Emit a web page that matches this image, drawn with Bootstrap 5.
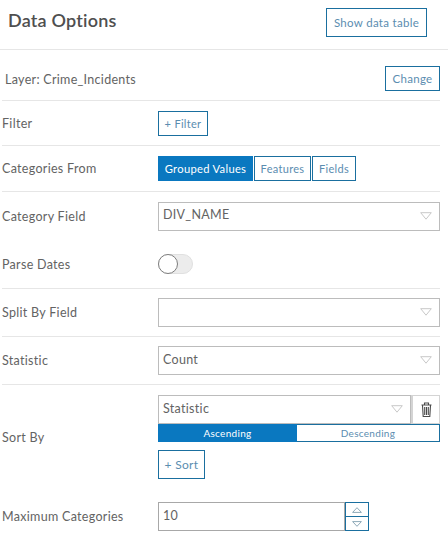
<!DOCTYPE html>
<html lang="en">
<head>
<meta charset="utf-8">
<title>Data Options</title>
<link rel="stylesheet" href="https://cdn.jsdelivr.net/npm/bootstrap@5.3.0/dist/css/bootstrap.min.css">
<style>
html,body{background:#fff;overflow:hidden}
body{font-family:Lato,"Open Sans","Liberation Sans",sans-serif;font-size:12.5px;color:#636363;width:448px;height:554px;letter-spacing:.3px}
.panel-head{height:50px;padding:8px 21px 0 8px;border-bottom:1px solid #e6e6e6}
.panel-title{font-size:18px;font-weight:600;color:#4f4f4f;line-height:26px;margin:-1px 0 0;letter-spacing:.2px}
.opt-row{margin:0 8px 0 2px;border-bottom:1px solid #e6e6e6}
.opt-row.plain{border-bottom:0}
.opt-label{width:156px;flex:none;padding-top:2px}
.layer-name{padding:3px 0 0 3px}
.opt-ctl{width:282px;flex:none}
.esri-btn{display:block;background:#fff;border:1px solid #1a6f9f;color:#5b8db0;border-radius:0;font-size:11.5px;line-height:1;padding:0;letter-spacing:.3px}
.esri-btn.on{background:#0a78c0;border-color:#0a78c0;color:#fff}
.w-table{width:101px;height:29px}
.w-change{width:55px;height:25px}
.w-filter{width:50px;height:25px;font-size:11px}
.w-group{width:95px;height:25px;font-size:11.2px}
.w-feat{width:57px;height:25px;font-size:11px}
.w-field{width:44px;height:25px;font-size:11px}
.w-sort{width:47px;height:29px;font-size:12px}
.esri-select{height:29px;border:1px solid #bcbcbc;background:#fff;padding:0 7px 1px 4px;color:#636363;font-size:12.5px;line-height:1}
.caret-ico{width:12px;height:8px;flex:none}
.trash-box{width:29px;height:29px;border:1px solid #d4d4d4;border-left:2px solid #d4d4d4;flex:none}
.seg-btn{height:18px;font-size:10px}
.seg-a{width:139px}
.seg-b{width:143px;border-left:0}
.toggle-track{width:35px;height:20px;background:#ececec;border:1px solid #e0e0e0;border-radius:10px;position:relative}
.toggle-knob{position:absolute;left:-1px;top:-1px;width:20px;height:20px;border-radius:50%;background:#fff;border:1px solid #7d7d7d}
.num-input{width:187px;height:29px;border:1px solid #a8a8a8;padding:0 4px 1px;color:#636363;font-size:12.5px}
.spin{width:24px;height:29px;flex:none}
.spin-btn{height:15px;border:1px solid #1a6f9f;background:#fff}
.spin-btn+.spin-btn{border-top:0;height:14px}
.ms-px{margin-left:1px}
.h-layer{height:51px;padding-top:7px}.h-filter{height:45px}.h-cat{height:46px}.h-field{height:48px}.h-parse{height:49px}.h-split{height:48px}.h-stat{height:48px}.h-sort{height:104px}.h-max{height:55px}
</style>
</head>
<body>
<div class="panel-head d-flex justify-content-between align-items-start">
  <h1 class="panel-title">Data Options</h1>
  <button class="esri-btn w-table">Show data table</button>
</div>
<div class="opt-row h-layer d-flex align-items-center justify-content-between">
  <span class="layer-name">Layer: Crime_Incidents</span>
  <button class="esri-btn w-change">Change</button>
</div>
<div class="opt-row h-filter d-flex align-items-center">
  <span class="opt-label">Filter</span>
  <button class="esri-btn w-filter">+ Filter</button>
</div>
<div class="opt-row h-cat d-flex align-items-center">
  <span class="opt-label">Categories From</span>
  <div class="d-flex">
    <button class="esri-btn on w-group">Grouped Values</button>
    <button class="esri-btn w-feat ms-px">Features</button>
    <button class="esri-btn w-field ms-px">Fields</button>
  </div>
</div>
<div class="opt-row plain h-field d-flex align-items-center">
  <span class="opt-label">Category Field</span>
  <div class="opt-ctl esri-select d-flex align-items-center justify-content-between"><span>DIV_NAME</span>
    <svg class="caret-ico" viewBox="0 0 12 8"><path d="M.7.7h10.6L6 7.2z" fill="#fff" stroke="#c8c8c8"/></svg></div>
</div>
<div class="opt-row h-parse d-flex align-items-center">
  <span class="opt-label">Parse Dates</span>
  <div class="toggle-track"><div class="toggle-knob"></div></div>
</div>
<div class="opt-row h-split d-flex align-items-center">
  <span class="opt-label">Split By Field</span>
  <div class="opt-ctl esri-select d-flex align-items-center justify-content-end">
    <svg class="caret-ico" viewBox="0 0 12 8"><path d="M.7.7h10.6L6 7.2z" fill="#fff" stroke="#c8c8c8"/></svg></div>
</div>
<div class="opt-row h-stat d-flex align-items-center">
  <span class="opt-label">Statistic</span>
  <div class="opt-ctl esri-select d-flex align-items-center justify-content-between"><span>Count</span>
    <svg class="caret-ico" viewBox="0 0 12 8"><path d="M.7.7h10.6L6 7.2z" fill="#fff" stroke="#c8c8c8"/></svg></div>
</div>
<div class="opt-row plain h-sort d-flex align-items-center">
  <span class="opt-label">Sort By</span>
  <div class="opt-ctl">
    <div class="d-flex">
      <div class="esri-select flex-grow-1 d-flex align-items-center justify-content-between"><span>Statistic</span>
        <svg class="caret-ico" viewBox="0 0 12 8"><path d="M.7.7h10.6L6 7.2z" fill="#fff" stroke="#c8c8c8"/></svg></div>
      <div class="trash-box d-flex align-items-center justify-content-center">
        <svg width="11" height="15" viewBox="0 0 11 15"><path d="M.5 3h10M3.5 3V1h4v2M1.5 3.5 2.2 14.5h6.6l.7-11M3.7 5v8M5.5 5v8M7.3 5v8" fill="none" stroke="#4a4a4a" stroke-width="1.1"/></svg>
      </div>
    </div>
    <div class="d-flex">
      <button class="esri-btn on seg-btn seg-a">Ascending</button>
      <button class="esri-btn seg-btn seg-b">Descending</button>
    </div>
    <button class="esri-btn w-sort mt-2">+ Sort</button>
  </div>
</div>
<div class="opt-row plain h-max d-flex align-items-center">
  <span class="opt-label">Maximum Categories</span>
  <div class="d-flex">
    <div class="num-input d-flex align-items-center">10</div>
    <div class="spin">
      <div class="spin-btn d-flex align-items-center justify-content-center"><svg width="10" height="6" viewBox="0 0 10 6"><path d="M.6 5.4h8.8L5 .7z" fill="#fff" stroke="#8ea9b8"/></svg></div>
      <div class="spin-btn d-flex align-items-center justify-content-center"><svg width="10" height="6" viewBox="0 0 10 6"><path d="M.6.6h8.8L5 5.3z" fill="#fff" stroke="#8ea9b8"/></svg></div>
    </div>
  </div>
</div>
<script src="https://cdn.jsdelivr.net/npm/bootstrap@5.3.0/dist/js/bootstrap.bundle.min.js"></script>
</body>
</html>
